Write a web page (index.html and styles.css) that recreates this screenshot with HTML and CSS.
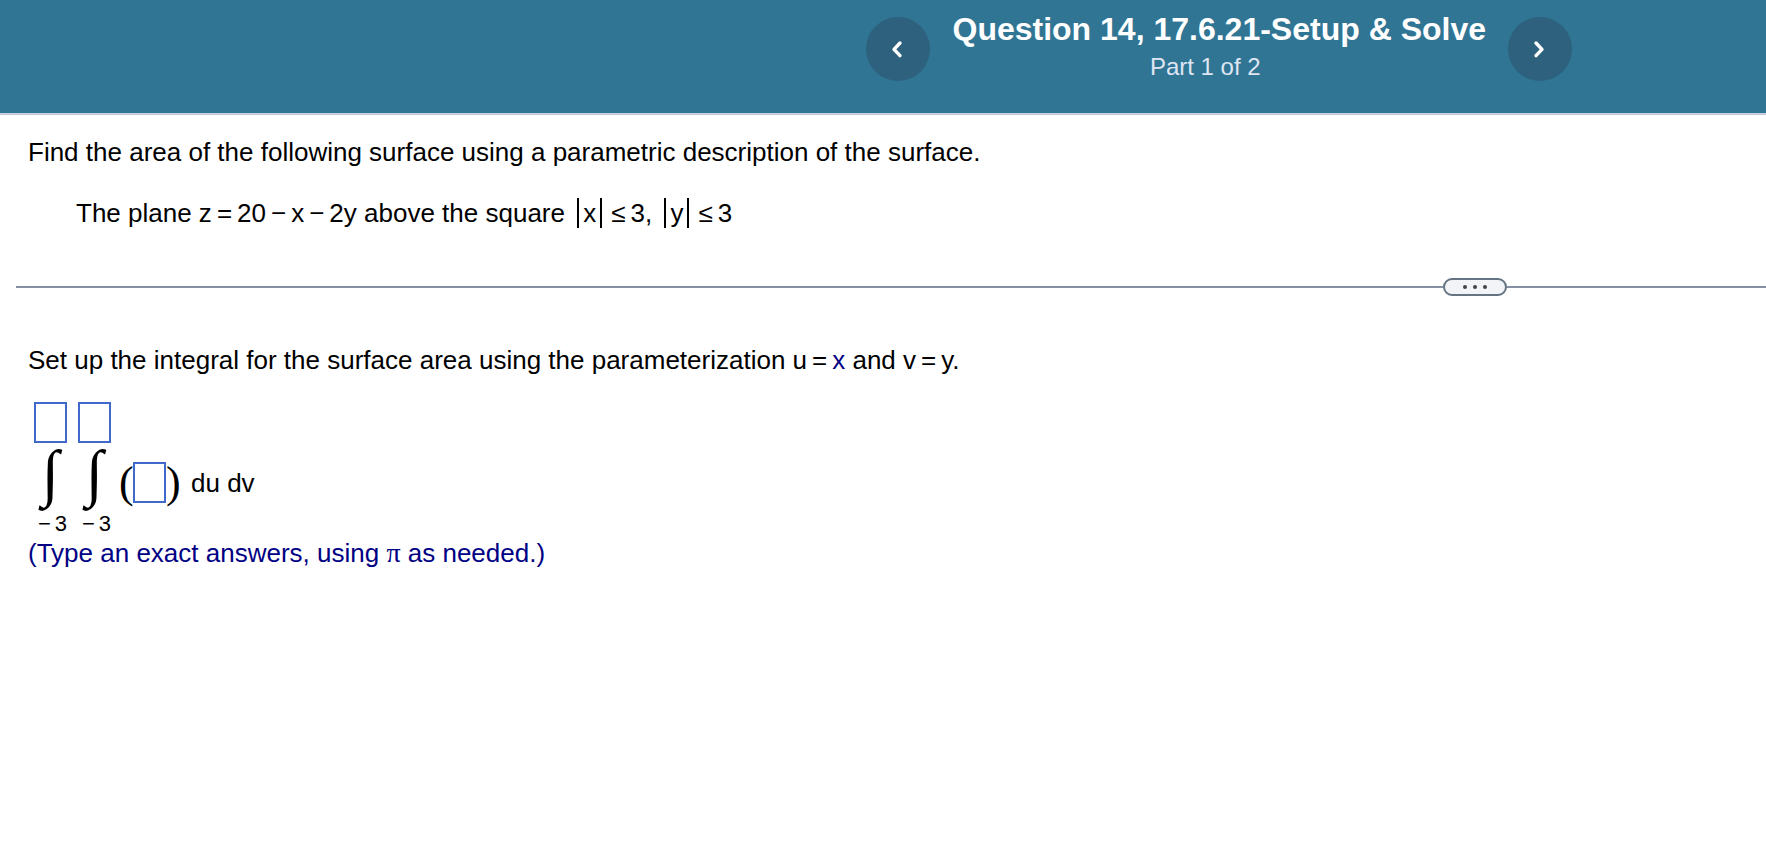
FILE: index.html
```html
<!DOCTYPE html>
<html lang="en">
<head>
    <meta charset="UTF-8">
    <meta name="viewport" content="width=device-width, initial-scale=1.0">
    <title>Question 14, 17.6.21-Setup &amp; Solve</title>
    <link rel="stylesheet" href="styles.css">
</head>
<body>

<header class="question-bar">
    <button type="button" class="nav-button" aria-label="Previous question">
        <svg width="64" height="64" viewBox="0 0 64 64">
            <path class="chevron" d="M34 26 L28 32.3 L34 38.6"></path>
        </svg>
    </button>
    <div class="question-heading">
        <h1 class="question-title">Question 14, 17.6.21-Setup &amp; Solve</h1>
        <div class="question-part">Part 1 of 2</div>
    </div>
    <button type="button" class="nav-button" aria-label="Next question">
        <svg width="64" height="64" viewBox="0 0 64 64">
            <path class="chevron" d="M28 26 L34 32.3 L28 38.6"></path>
        </svg>
    </button>
</header>

<main>
    <section class="problem">
        <p>Find the area of the following surface using a parametric description of the surface.</p>
        <p class="given">The plane z<span class="op">=</span>20<span class="op">−</span>x<span class="op">−</span>2y above the square <span class="abs">x</span><span class="op">≤</span>3, <span class="abs">y</span><span class="op">≤</span>3</p>
    </section>

    <div class="divider">
        <span class="line"></span>
        <button type="button" class="divider-button" aria-label="Expand or collapse the question">
            <span class="dot"></span><span class="dot"></span><span class="dot"></span>
        </button>
        <span class="line line-end"></span>
    </div>

    <section class="answer">
        <p>Set up the integral for the surface area using the parameterization u<span class="op">=</span><span class="var">x</span> and v<span class="op">=</span>y.</p>
        <div class="formula">
            <div class="integrals">
                <div class="integral">
                    <input type="text" class="blank" aria-label="Upper limit of the outer integral">
                    <span class="sign">∫</span>
                    <span class="bound">−<span class="bound-value">3</span></span>
                </div>
                <div class="integral">
                    <input type="text" class="blank" aria-label="Upper limit of the inner integral">
                    <span class="sign">∫</span>
                    <span class="bound">−<span class="bound-value">3</span></span>
                </div>
            </div>
            <div class="integrand">
                <span class="paren">(</span>
                <input type="text" class="blank" aria-label="Integrand">
                <span class="paren">)</span>
                <span class="differential">du dv</span>
            </div>
        </div>
        <p class="hint">(Type an exact answers, using <span class="pi">π</span> as needed.)</p>
    </section>
</main>

</body>
</html>
```
FILE: styles.css
```css
* {
    box-sizing: border-box;
}
body {
    margin: 0;
    background-color: #fff;
    color: #000;
    font-family: "Liberation Sans", Arial, sans-serif;
    font-size: 26px;
    line-height: 30px;
}
p {
    margin: 0;
}

/* top bar */
.question-bar {
    display: flex;
    justify-content: flex-end;
    align-items: flex-end;
    gap: 22px;
    padding: 11px 194px 32px 16px;
    background-color: #317595;
    border-bottom: 2px solid #c9cedb;
}
.question-heading {
    text-align: center;
}
.question-title {
    margin: 0 0 6px;
    color: #fff;
    font-size: 32px;
    line-height: 36px;
}
.question-part {
    padding-right: 28px;
    color: #dfe6f2;
    font-size: 24px;
    line-height: 28px;
}
.nav-button {
    flex: none;
    width: 64px;
    height: 64px;
    padding: 0;
    border: none;
    border-radius: 50%;
    background-color: #2d617d;
    cursor: pointer;
}
.nav-button svg {
    display: block;
}
.chevron {
    fill: none;
    stroke: #fff;
    stroke-width: 3.4;
    stroke-linecap: round;
    stroke-linejoin: round;
}

/* problem statement */
.problem {
    padding: 22px 28px 50px;
}
.given {
    margin-top: 31px;
    padding-left: 48px;
}
.op {
    margin: 0 5px;
}
.abs {
    margin: 0 4px 0 5px;
    padding: 0 4px;
    border-left: 2px solid #000;
    border-right: 2px solid #000;
}

/* divider with the expand button */
.divider {
    display: flex;
    align-items: center;
    padding-left: 16px;
}
.line {
    flex: 1;
    height: 2px;
    background-color: #8591a2;
}
.line-end {
    flex: 0 0 259px;
}
.divider-button {
    display: flex;
    justify-content: center;
    align-items: center;
    gap: 6px;
    width: 64px;
    height: 18px;
    padding: 0;
    border: 2px solid #647482;
    border-radius: 9px;
    background-color: #f3f4f8;
    cursor: pointer;
}
.dot {
    width: 4px;
    height: 4px;
    border-radius: 50%;
    background-color: #444;
}

/* answer area */
.answer {
    padding: 49px 28px;
}
.var,
.hint {
    color: #000084;
}
.formula {
    display: flex;
    align-items: flex-end;
    gap: 8px;
    margin: 27px 0 2px;
    padding-left: 6px;
}
.integrals {
    display: flex;
    gap: 11px;
}
.integral {
    display: flex;
    flex-direction: column;
    align-items: center;
    width: 33px;
}
.blank {
    width: 33px;
    height: 41px;
    padding: 0 4px;
    border: 2px solid #3f69cb;
    border-radius: 0;
    background-color: #fff;
    font: inherit;
}
.sign {
    height: 69px;
    font-family: "Liberation Serif", "Times New Roman", serif;
    font-size: 63px;
    line-height: 60px;
}
.bound {
    align-self: flex-end;
    font-size: 22px;
    line-height: 24px;
}
.bound-value {
    margin-left: 4px;
}
.integrand {
    display: flex;
    align-items: center;
    padding-bottom: 33px;
}
.paren {
    width: 14px;
    font-family: "Liberation Serif", "Times New Roman", serif;
    font-size: 44px;
    line-height: 41px;
}
.differential {
    margin-left: 11px;
}
.pi {
    font-family: "Liberation Serif", "Times New Roman", serif;
    font-size: 28px;
}
```
